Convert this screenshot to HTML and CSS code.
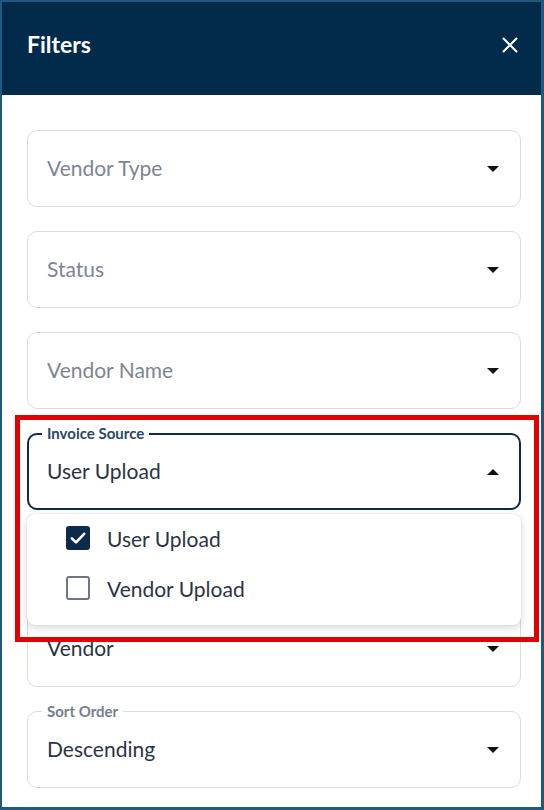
FILE: index.html
```html
<!DOCTYPE html>
<html lang="en">
<head>
<meta charset="utf-8">
<title>Filters</title>
<link rel="stylesheet" href="styles.css">
</head>
<body>
<div class="panel">
  <header class="head">
    <h1 class="title">Filters</h1>
    <button class="close" aria-label="Close">
      <svg width="16" height="16" viewBox="0 0 16 16"><path d="M1.5 1.5 L14.5 14.5 M14.5 1.5 L1.5 14.5" stroke="#fff" stroke-width="2" stroke-linecap="round"/></svg>
    </button>
  </header>
  <div class="content">
    <div class="field"><span class="ph">Vendor Type</span><span class="caret"></span></div>
    <div class="field"><span class="ph">Status</span><span class="caret"></span></div>
    <div class="field"><span class="ph">Vendor Name</span><span class="caret"></span></div>
    <div class="wrap open">
      <div class="field active">
        <span class="label">Invoice Source</span>
        <span class="val">User Upload</span><span class="caret up"></span>
      </div>
      <ul class="menu">
        <li class="opt"><span class="box checked"><svg width="24" height="24" viewBox="0 0 24 24"><path d="M5.8 12.4 L10 16.4 L18.2 7.8" fill="none" stroke="#fff" stroke-width="2.6" stroke-linecap="round" stroke-linejoin="round"/></svg></span><span class="opt-text">User Upload</span></li>
        <li class="opt"><span class="box"></span><span class="opt-text">Vendor Upload</span></li>
      </ul>
    </div>
    <div class="field"><span class="val">Vendor</span><span class="caret"></span></div>
    <div class="field">
      <span class="label muted">Sort Order</span>
      <span class="val">Descending</span><span class="caret"></span>
    </div>
  </div>
  <div class="highlight"></div>
</div>
</body>
</html>
```
FILE: styles.css
```css
* { box-sizing: border-box; }
html, body { margin: 0; padding: 0; background: #fff; }
body { font-family: Lato, "Open Sans", "Liberation Sans", sans-serif; }

.panel {
  position: relative;
  width: 544px;
  height: 810px;
  border: 2px solid #1e5a80;
  border-right-width: 3px;
  border-bottom-width: 3px;
  overflow: hidden;
  background: #fff;
}

.head {
  height: 93px;
  background: #012a4b;
  display: flex;
  align-items: flex-start;
  justify-content: space-between;
  padding: 27px 23px 0 25px;
}
.title {
  margin: 0;
  color: #fff;
  font-size: 23px;
  line-height: 30px;
  font-weight: 700;
}
.close {
  margin-top: 8px;
  width: 16px;
  height: 16px;
  padding: 0;
  border: 0;
  background: none;
  display: block;
}
.close svg { display: block; }

.content {
  display: flex;
  flex-direction: column;
  gap: 24px;
  padding: 35px 20px 0 25px;
}

.field {
  position: relative;
  height: 77px;
  border: 1px solid #d9dce2;
  border-radius: 10px;
  display: flex;
  align-items: center;
  justify-content: space-between;
  padding: 0 21px 2px 19px;
  font-size: 21px;
}
.field.active {
  border: 2px solid #0e2a48;
  padding: 0 20px 2px 18px;
}

.ph { color: #7d8594; }
.val { color: #2b3444; }

.caret {
  width: 0;
  height: 0;
  margin-top: 2px;
  border-left: 6.5px solid transparent;
  border-right: 6.5px solid transparent;
  border-top: 6.5px solid #111;
}
.caret.up {
  border-top: 0;
  border-bottom: 6.5px solid #111;
}

.label {
  position: absolute;
  top: -11px;
  left: 13px;
  padding: 0 5px;
  background: #fff;
  font-size: 15px;
  line-height: 18px;
  font-weight: 700;
  color: #2a4868;
}
.label.muted {
  left: 14px;
  top: -10px;
  color: #767e8c;
}

.wrap { position: relative; margin-bottom: 76px; }

.menu {
  position: absolute;
  z-index: 2;
  left: 0;
  right: 0;
  top: 81px;
  margin: 0;
  padding: 0 0 11px;
  list-style: none;
  background: #fff;
  border-radius: 8px;
  box-shadow: 0 3px 8px rgba(30, 40, 60, 0.18), 0 0 1px rgba(30, 40, 60, 0.2);
}
.opt {
  height: 50px;
  display: flex;
  align-items: center;
  padding-left: 39px;
  padding-bottom: 2px;
  gap: 17px;
  font-size: 21px;
  color: #2b3444;
}
.box {
  width: 24px;
  height: 24px;
  border: 2.5px solid #6f7683;
  border-radius: 3px;
  flex: none;
}
.box.checked {
  border: 0;
  background: #0c2a4a;
}
.box svg { display: block; }

.highlight {
  position: absolute;
  z-index: 3;
  left: 13px;
  top: 413px;
  width: 524px;
  height: 227px;
  border: 5px solid #e30000;
  pointer-events: none;
}
```
